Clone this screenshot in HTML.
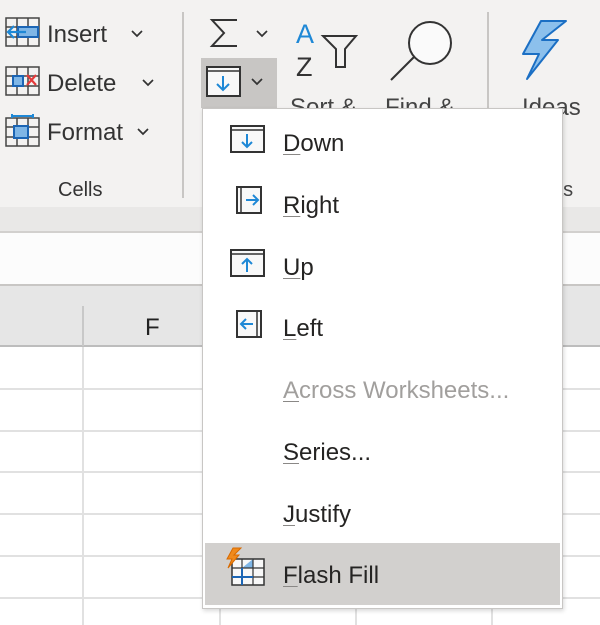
<!DOCTYPE html>
<html><head><meta charset="utf-8"><style>
*{margin:0;padding:0;box-sizing:border-box}
body{width:600px;height:625px;overflow:hidden;position:relative;background:#fff;font-family:"Liberation Sans","DejaVu Sans",sans-serif;color:#262626}
.a{position:absolute}
.rib{left:0;top:0;width:600px;height:207px;background:#f3f2f1}
.t{position:absolute;font-size:24px;white-space:nowrap;line-height:1}
.u{text-decoration:underline;text-decoration-color:#8a8886;text-underline-offset:3px;text-decoration-thickness:1px}
.m{position:absolute;left:283px;font-size:24px;line-height:1;white-space:nowrap;color:#252423}
.hl{position:absolute;background:#e1e1e1}
.v{position:absolute;background:#e1e1e1;width:2px}
</style></head><body>
<div class="a rib"></div>
<div class="a" style="left:0;top:207px;width:600px;height:24px;background:#e9e8e7"></div>
<div class="a" style="left:0;top:231px;width:600px;height:2px;background:#d2d0ce"></div>
<div class="a" style="left:0;top:233px;width:600px;height:51px;background:#fcfcfc"></div>
<div class="a" style="left:0;top:284px;width:600px;height:2px;background:#c8c6c4"></div>
<div class="a" style="left:0;top:286px;width:600px;height:60px;background:#e6e6e6"></div>
<div class="a" style="left:0;top:345px;width:600px;height:2px;background:#bdbdbd"></div>
<div class="a" style="left:82px;top:306px;width:2px;height:40px;background:#c8c8c8"></div>
<div class="t" style="left:145px;top:316px;font-size:24px;color:#222">F</div>
<div class="hl" style="left:0;top:388px;width:600px;height:2px"></div>
<div class="hl" style="left:0;top:430px;width:600px;height:2px"></div>
<div class="hl" style="left:0;top:471px;width:600px;height:2px"></div>
<div class="hl" style="left:0;top:513px;width:600px;height:2px"></div>
<div class="hl" style="left:0;top:555px;width:600px;height:2px"></div>
<div class="hl" style="left:0;top:597px;width:600px;height:2px"></div>
<div class="v" style="left:82px;top:347px;height:278px"></div>
<div class="v" style="left:219px;top:347px;height:278px"></div>
<div class="v" style="left:355px;top:347px;height:278px"></div>
<div class="v" style="left:491px;top:347px;height:278px"></div>
<svg class="a" style="left:0;top:0" width="600" height="207">
 <g fill="none" stroke="#444" stroke-width="1.5">
  <rect x="6" y="18" width="33" height="28"/><path d="M6 27h33M6 37h33M17 18v28M28 18v28"/>
  <rect x="6" y="67" width="33" height="28"/><path d="M6 76h33M6 86h33M17 67v28M28 67v28"/>
  <rect x="6" y="118" width="33" height="28"/><path d="M6 127h33M6 137h33M17 118v28M28 118v28"/>
 </g>
 <rect x="18" y="27" width="20" height="10" fill="#7fb6e6" stroke="#1b65b5" stroke-width="2"/>
 <path d="M26 32H8M14 26l-6 6 6 6" fill="none" stroke="#1e88d6" stroke-width="2.2"/>
 <rect x="13" y="76" width="10" height="10" fill="#7fb6e6" stroke="#1b65b5" stroke-width="2"/>
 <path d="M27 75l9 10M36 75l-9 10" stroke="#e53a3a" stroke-width="2.2"/>
 <rect x="14" y="126" width="14" height="12" fill="#7fb6e6" stroke="#1b65b5" stroke-width="2"/>
 <path d="M12 118v-4M33 118v-4M12 116h21" stroke="#1e88d6" stroke-width="2"/>
 <path d="M132 31l5 5 5-5M143 80l5 5 5-5M138 129l5 5 5-5" fill="none" stroke="#333" stroke-width="1.7"/>
 <line x1="183" y1="12" x2="183" y2="198" stroke="#c8c6c4" stroke-width="2"/>
 <line x1="488" y1="12" x2="488" y2="198" stroke="#c8c6c4" stroke-width="2"/>
 <path d="M237 20h-25l12 13-12 13h25" fill="none" stroke="#333" stroke-width="2"/>
 <path d="M257 31l5 5 5-5" fill="none" stroke="#333" stroke-width="1.7"/>
 <rect x="201" y="58" width="76" height="50" fill="#c8c6c4"/>
 <rect x="207" y="67" width="33" height="29" fill="#f8f8f8" stroke="#333" stroke-width="2"/>
 <line x1="207" y1="71" x2="240" y2="71" stroke="#333" stroke-width="1.5"/>
 <path d="M223 76v14M217 84l6 6 6-6" fill="none" stroke="#1e88d6" stroke-width="2"/>
 <path d="M252 79l5 5 5-5" fill="none" stroke="#333" stroke-width="1.7"/>
 <text x="296" y="43" font-family="Liberation Sans" font-size="27" fill="#1e88d6">A</text>
 <text x="296" y="76" font-family="Liberation Sans" font-size="27" fill="#333">Z</text>
 <path d="M323 36h33l-11 13v18h-9V49z" fill="none" stroke="#333" stroke-width="2"/>
 <circle cx="430" cy="43" r="21" fill="#fafafa" stroke="#333" stroke-width="2"/>
 <path d="M414 57L391 80" stroke="#333" stroke-width="2"/>
 <path d="M566 21h-25l-18 33h16l-12 25 31-39h-16z" fill="#8cc0ec" stroke="#1b6fc4" stroke-width="2" stroke-linejoin="round"/>
</svg>
<div class="t" style="left:47px;top:23px;color:#333">Insert</div>
<div class="t" style="left:47px;top:72px;color:#333">Delete</div>
<div class="t" style="left:47px;top:121px;color:#333">Format</div>
<div class="t" style="left:58px;top:180px;font-size:20px;color:#333">Cells</div>
<div class="t" style="left:290px;top:96px;color:#444">Sort &amp;</div>
<div class="t" style="left:385px;top:96px;color:#444">Find &amp;</div>
<div class="t" style="left:522px;top:96px;color:#444">Ideas</div>
<div class="t" style="left:552px;top:180px;font-size:20px;color:#444">as</div>
<div class="a" style="left:202px;top:108px;width:361px;height:501px;background:#fff;border:1px solid #c8c6c4;box-shadow:1px 2px 4px rgba(0,0,0,.15)"></div>
<div class="a" style="left:205px;top:543px;width:355px;height:62px;background:#d2d0ce"></div>
<svg class="a" style="left:202px;top:108px" width="361" height="501">
 <g fill="#f8f8f8" stroke="#333" stroke-width="2">
  <rect x="29" y="18" width="33" height="26"/>
  <rect x="35" y="79" width="24" height="26"/>
  <rect x="29" y="142" width="33" height="26"/>
  <rect x="35" y="203" width="24" height="26"/>
 </g>
 <g stroke="#333" stroke-width="1.5" fill="none">
  <path d="M29 22h33M39 79v26M29 146h33M55 203v26"/>
 </g>
 <g stroke="#1e88d6" stroke-width="2" fill="none">
  <path d="M45 26v13M40 34l5 5 5-5"/>
  <path d="M44 92h11M51 87l5 5-5 5"/>
  <path d="M45 151v13M40 156l5-5 5 5"/>
  <path d="M40 216h11M44 211l-5 5 5 5"/>
 </g>
 <g stroke="#333" stroke-width="1.5" fill="#f8f8f8">
  <rect x="30" y="451" width="32" height="26"/>
 </g>
 <path d="M40 460l11-9v9z" fill="#7fb6e6"/>
 <path d="M30 460h32M30 469h32M40 451v26M51 451v26" stroke="#333" stroke-width="1.2" fill="none"/>
 <path d="M40 460v17M30 469h21" stroke="#1b65b5" stroke-width="2"/>
 <path d="M39 440h-8l-6 11h5l-4 9 11-13h-5z" fill="#f08a1c" stroke="#d86a00" stroke-width="1"/>
</svg>
<div class="m" style="top:132px"><span class="u">D</span>own</div>
<div class="m" style="top:194px"><span class="u">R</span>ight</div>
<div class="m" style="top:256px"><span class="u">U</span>p</div>
<div class="m" style="top:317px"><span class="u">L</span>eft</div>
<div class="m" style="top:379px;color:#a19f9d"><span class="u">A</span>cross Worksheets...</div>
<div class="m" style="top:441px"><span class="u">S</span>eries...</div>
<div class="m" style="top:503px"><span class="u">J</span>ustify</div>
<div class="m" style="top:564px"><span class="u">F</span>lash Fill</div>
</body></html>
